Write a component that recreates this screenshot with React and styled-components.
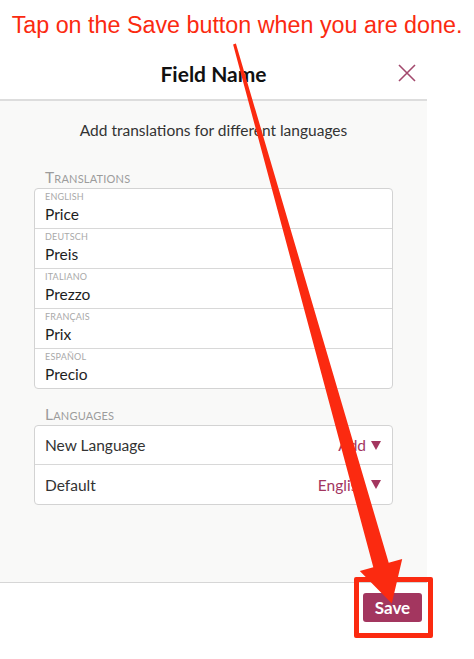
import React from 'react';
import styled, { createGlobalStyle } from 'styled-components';

const GlobalStyle = createGlobalStyle`
    html, body {
        margin: 0;
        padding: 0;
        background: #ffffff;
    }
    body {
        font-family: Lato, "Open Sans", sans-serif;
        color: #222222;
    }
`;

const RED = '#fb2a10';
const CRIMSON = '#a3365f';

const Page = styled.div`
    position: relative;
    width: 474px;
    height: 659px;
    overflow: hidden;
`;

const Caption = styled.div`
    height: 48px;
    padding-top: 12px;
    box-sizing: border-box;
    text-align: center;
    font-family: "Liberation Sans", Arial, sans-serif;
    font-size: 23.3px;
    line-height: 27px;
    color: ${RED};
    white-space: nowrap;
`;

const Panel = styled.div`
    width: 427px;
`;

const Header = styled.div`
    position: relative;
    height: 51px;
    display: flex;
    align-items: center;
    justify-content: center;
    border-bottom: 2px solid #dddddd;
`;

const Title = styled.h1`
    margin: 0;
    font-size: 21px;
    font-weight: 700;
    color: #111111;
`;

const CloseButton = styled.button`
    position: absolute;
    right: 10px;
    top: 15px;
    width: 20px;
    height: 20px;
    padding: 0;
    border: none;
    background: transparent;
    display: flex;
    align-items: center;
    justify-content: center;
`;

const Body = styled.div`
    background: #f9f9f8;
    padding: 19px 34px 77px;
    border-bottom: 1px solid #d6d6d6;
`;

const Intro = styled.p`
    margin: 0;
    text-align: center;
    font-size: 15.5px;
    line-height: 20px;
    color: #333333;
`;

const SectionLabel = styled.div`
    margin-top: ${p => p.$gap}px;
    padding-left: 11px;
    font-size: 15.5px;
    line-height: 16px;
    font-variant: small-caps;
    letter-spacing: 0.2px;
    color: #9c9c9c;
`;

const Group = styled.div`
    margin-top: 3px;
    background: #ffffff;
    border: 1px solid #d3d3d3;
    border-radius: 4px;
    overflow: hidden;
`;

const FieldRow = styled.div`
    height: 39px;
    box-sizing: border-box;
    padding: 1px 10px 0;
    & + & {
        height: 40px;
        border-top: 1px solid #d8d8d8;
    }
`;

const FieldLabel = styled.div`
    font-size: 9px;
    line-height: 13px;
    letter-spacing: 0.2px;
    text-transform: uppercase;
    color: #a9a9a9;
`;

const FieldValue = styled.div`
    font-size: 15.5px;
    line-height: 22px;
    color: #1e1e1e;
`;

const OptionRow = styled.div`
    height: 38px;
    box-sizing: border-box;
    display: flex;
    align-items: center;
    justify-content: space-between;
    padding: 0 11px 0 10px;
    & + & {
        height: 40px;
        border-top: 1px solid #d8d8d8;
    }
`;

const OptionName = styled.span`
    font-size: 15.5px;
    color: #333333;
`;

const OptionValue = styled.span`
    display: flex;
    align-items: center;
    gap: 5px;
    font-size: 15.5px;
    color: ${CRIMSON};
`;

const Footer = styled.div`
    display: flex;
    justify-content: flex-end;
    padding: 10px 5px 0 0;
`;

const SaveWrap = styled.div`
    position: relative;
`;

const SaveButton = styled.button`
    width: 59px;
    height: 29px;
    border: none;
    border-radius: 3px;
    background: ${CRIMSON};
    color: #ffffff;
    font-family: Lato, sans-serif;
    font-size: 17px;
    font-weight: 700;
    padding: 0;
`;

const Highlight = styled.div`
    position: absolute;
    top: -16px;
    bottom: -16px;
    left: -9px;
    right: -11px;
    border: 5px solid ${RED};
    border-radius: 2px;
    pointer-events: none;
`;

const Arrow = styled.svg`
    position: absolute;
    left: 0;
    top: 0;
    pointer-events: none;
`;

const Caret = () => (
    <svg width="10" height="9" viewBox="0 0 10 9">
        <polygon points="0,0 10,0 5,9" fill={CRIMSON} />
    </svg>
);

const translations = [
    { lang: 'English', value: 'Price' },
    { lang: 'Deutsch', value: 'Preis' },
    { lang: 'Italiano', value: 'Prezzo' },
    { lang: 'Français', value: 'Prix' },
    { lang: 'Español', value: 'Precio' },
];

const languages = [
    { name: 'New Language', value: 'Add' },
    { name: 'Default', value: 'English' },
];

export default function App() {
    return (
        <Page>
            <GlobalStyle />
            <Caption>Tap on the Save button when you are done.</Caption>

            <Panel>
                <Header>
                    <Title>Field Name</Title>
                    <CloseButton aria-label="Close">
                        <svg width="18" height="18" viewBox="0 0 18 18">
                            <path d="M1 1 L17 17 M17 1 L1 17" stroke="#a3496d" strokeWidth="1.6" />
                        </svg>
                    </CloseButton>
                </Header>

                <Body>
                    <Intro>Add translations for different languages</Intro>

                    <SectionLabel $gap={29}>Translations</SectionLabel>
                    <Group>
                        {translations.map(t => (
                            <FieldRow key={t.lang}>
                                <FieldLabel>{t.lang}</FieldLabel>
                                <FieldValue>{t.value}</FieldValue>
                            </FieldRow>
                        ))}
                    </Group>

                    <SectionLabel $gap={17}>Languages</SectionLabel>
                    <Group>
                        {languages.map(l => (
                            <OptionRow key={l.name}>
                                <OptionName>{l.name}</OptionName>
                                <OptionValue>{l.value}<Caret /></OptionValue>
                            </OptionRow>
                        ))}
                    </Group>
                </Body>

                <Footer>
                    <SaveWrap>
                        <SaveButton>Save</SaveButton>
                        <Highlight />
                    </SaveWrap>
                </Footer>
            </Panel>

            {/* annotation arrow drawn over the page */}
            <Arrow width="474" height="659" viewBox="0 0 474 659">
                <polygon
                    points="233.1,44.4 235.9,43.6 388.7,562.8 402.2,559 391.8,603.5 359.8,571 373.3,567.2"
                    fill={RED}
                />
            </Arrow>
        </Page>
    );
}
